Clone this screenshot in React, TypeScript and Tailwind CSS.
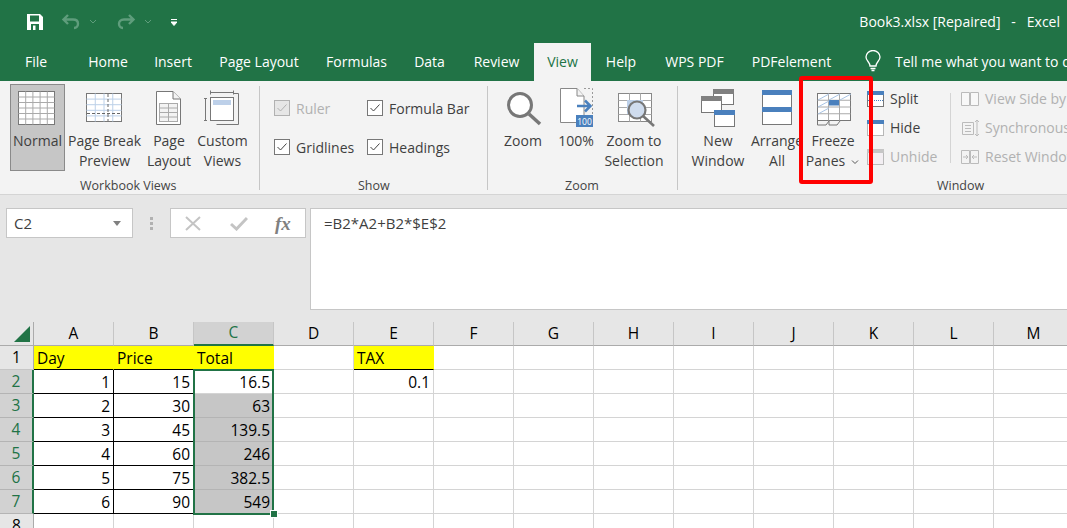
import React from "react";

const font = { fontFamily: '"Open Sans", "Noto Sans", sans-serif' };

const tabs = [
  { label: "File", w: "w-[75px] pr-[3px]" },
  { label: "Home", w: "w-[66px]" },
  { label: "Insert", w: "w-[64px]" },
  { label: "Page Layout", w: "w-[108px]" },
  { label: "Formulas", w: "w-[87px]" },
  { label: "Data", w: "w-[59px]" },
  { label: "Review", w: "w-[75px]" },
  { label: "View", w: "w-[57px]", active: true },
  { label: "Help", w: "w-[60px]" },
  { label: "WPS PDF", w: "w-[87px]" },
  { label: "PDFelement", w: "w-[107px]" },
];

// icons are drawn in page coordinates, the viewBox crops them to the button
function Icon({ x, w, children }: { x: number; w: number; children?: React.ReactNode }) {
  return (
    <svg width={w} height={47} viewBox={`${x} 84 ${w} 47`} className="block shrink-0">
      {children}
    </svg>
  );
}

function GridLines({ x, y, w, h, cols, rows, color }: { x: number; y: number; w: number; h: number; cols: number; rows: number; color: string }) {
  const out = [];
  for (let i = 1; i < cols; i++) {
    const p = x + (w * i) / cols;
    out.push(<line key={"c" + i} x1={p} y1={y} x2={p} y2={y + h} stroke={color} />);
  }
  for (let i = 1; i < rows; i++) {
    const p = y + (h * i) / rows;
    out.push(<line key={"r" + i} x1={x} y1={p} x2={x + w} y2={p} stroke={color} />);
  }
  return <>{out}</>;
}

function RibbonButton({ w, x, lines, active, chevron, children }: { w: string; x: number; lines: string[]; active?: boolean; chevron?: boolean; children?: React.ReactNode }) {
  const px = parseInt(w.replace(/\D/g, ""), 10);
  return (
    <div className={`${w} h-[87px] flex flex-col items-center shrink-0 ${active ? "bg-[#c6c6c6] outline outline-1 -outline-offset-1 outline-[#8a8a8a]" : ""}`}>
      <Icon x={x} w={px}>{children}</Icon>
      {lines.map((l, i) => (
        <div key={l} className="h-[20px] leading-[20px] whitespace-nowrap flex items-center">
          {l}
          {chevron && i === lines.length - 1 && (
            <svg width="10" height="6" viewBox="0 0 10 6" className="ml-[5px] mt-[2px]">
              <path d="M2 1.5 L5 4.5 L8 1.5" fill="none" stroke="#555" />
            </svg>
          )}
        </div>
      ))}
    </div>
  );
}

function Check({ label, disabled }: { label: string; disabled?: boolean }) {
  return (
    <div className={`flex items-center gap-[6px] h-[16px] ${disabled ? "text-[#b1b1b1]" : ""}`}>
      <span className={`w-[16px] h-[16px] border flex items-center justify-center ${disabled ? "border-[#b1b1b1] bg-[#e6e6e6]" : "border-[#777] bg-white"}`}>
        <svg width="12" height="10" viewBox="0 0 12 10">
          <path d="M1.5 5 L4.5 8 L10.5 1.5" fill="none" stroke={disabled ? "#b1b1b1" : "#444"} />
        </svg>
      </span>
      <span className="whitespace-nowrap">{label}</span>
    </div>
  );
}

function SmallRow({ label, disabled, children, gap }: { label: string; disabled?: boolean; children?: React.ReactNode; gap: string }) {
  return (
    <div className={`flex items-center h-[29px] whitespace-nowrap ${gap} ${disabled ? "text-[#b1b1b1]" : ""}`}>
      <svg width="20" height="20" viewBox="0 0 20 20" className="shrink-0">{children}</svg>
      <span>{label}</span>
    </div>
  );
}

function GroupLabel({ children, cls }: { children: React.ReactNode; cls: string }) {
  return <div className={`absolute top-[96px] h-[18px] leading-[18px] text-[12.5px] text-[#444] ${cls}`}>{children}</div>;
}

const columns = ["A", "B", "C", "D", "E", "F", "G", "H", "I", "J", "K", "L", "M"];

const sheet: Record<string, string> = {
  A1: "Day", B1: "Price", C1: "Total", E1: "TAX",
  A2: "1", B2: "15", C2: "16.5", E2: "0.1",
  A3: "2", B3: "30", C3: "63",
  A4: "3", B4: "45", C4: "139.5",
  A5: "4", B5: "60", C5: "246",
  A6: "5", B6: "75", C6: "382.5",
  A7: "6", B7: "90", C7: "549",
};

function Cell({ col, row }: { col: string; row: number }) {
  const id = col + row;
  const text = sheet[id];
  const isTable = (col === "A" || col === "B" || col === "C") && row <= 7;
  const yellow = row === 1 && (isTable || col === "E");
  const grey = col === "C" && row >= 3 && row <= 7;
  const black = (col === "A" || col === "B") && row >= 2 && row <= 7;
  let bg = "bg-white";
  if (yellow) bg = "bg-[#ffff00]";
  if (grey) bg = "bg-[#c6c6c6]";
  let border = "border-[#d4d4d4]";
  if (black) border = "border-black";
  if (yellow) border = "border-r-[#ffff00] border-b-black";
  if (grey) border = "border-[#b4b4b4]";
  return (
    <div className={`h-[24px] border-r border-b ${bg} ${border} px-[3px] text-[15.5px] leading-[25px] text-black whitespace-nowrap ${row === 1 ? "text-left" : "text-right"}`}>
      {text}
    </div>
  );
}

export default function App() {
  return (
    <div className="relative w-[1067px] h-[528px] overflow-hidden bg-[#e6e6e6] text-[14px] text-[#3f3f3f]" style={font}>
      {/* Title bar */}
      <div className="h-[43px] bg-[#217346] flex items-center text-white">
        <svg width="18" height="18" viewBox="0 0 18 18" className="ml-[26px]">
          <path d="M1 1 H14 L17 4 V17 H1 Z" fill="white" />
          <rect x="4" y="2.5" width="9" height="6" fill="#217346" />
          <rect x="5" y="11" width="8" height="6" fill="#217346" />
          <rect x="7" y="12.5" width="2.5" height="4.5" fill="white" />
        </svg>
        <svg width="20" height="18" viewBox="0 0 20 18" className="ml-[17px]">
          <path d="M7 2 L2.5 6.5 L7 11 M3 6.5 H12 C19 6.5 18 15 13 15" fill="none" stroke="#5f9d7c" strokeWidth="2.4" />
        </svg>
        <svg width="8" height="5" viewBox="0 0 8 5" className="ml-[8px]">
          <path d="M1 1 L4 4 L7 1" fill="none" stroke="#5f9d7c" />
        </svg>
        <svg width="20" height="18" viewBox="0 0 20 18" className="ml-[19px]">
          <path d="M13 2 L17.5 6.5 L13 11 M17 6.5 H8 C1 6.5 2 15 7 15" fill="none" stroke="#5f9d7c" strokeWidth="2.4" />
        </svg>
        <svg width="8" height="5" viewBox="0 0 8 5" className="ml-[8px]">
          <path d="M1 1 L4 4 L7 1" fill="none" stroke="#5f9d7c" />
        </svg>
        <svg width="6" height="7" viewBox="0 0 6 7" className="ml-[19px] mt-[1px]">
          <path d="M0 0.5 H6 M0 3 H6 L3 6.5 Z" fill="white" stroke="white" strokeWidth="1" />
        </svg>
        <div className="ml-auto mr-[7px] text-[14px] whitespace-pre">Book3.xlsx [Repaired]   -   Excel</div>
      </div>

      {/* Tabs */}
      <div className="h-[38px] bg-[#217346] flex items-stretch text-white">
        {tabs.map((t) => (
          <div key={t.label} className={`${t.w} shrink-0 flex items-center justify-center pb-[1px] whitespace-nowrap ${t.active ? "bg-[#f3f3f3] text-[#217346]" : ""}`}>
            {t.label}
          </div>
        ))}
        <svg width="18" height="22" viewBox="0 0 18 22" className="ml-[19px] mt-[7px] shrink-0">
          <path d="M6 16 C6 12 2 11 2 7 A7 6.5 0 0 1 16 7 C16 11 12 12 12 16 Z M6.5 18.5 H11.5 M7.5 20.5 H10.5" fill="none" stroke="white" strokeWidth="1.3" />
        </svg>
        <div className="ml-[13px] flex items-center pb-[1px] whitespace-nowrap">Tell me what you want to do</div>
      </div>

      {/* Ribbon */}
      <div className="relative h-[114px] bg-[#f3f3f3] border-b border-[#d4d4d4] flex">
        <div className="w-[260px] relative shrink-0 flex pl-[10px] pt-[3px]">
          <RibbonButton w="w-[55px]" x={10} lines={["Normal"]} active>
            <rect x="18.5" y="91.5" width="36" height="33" fill="white" stroke="#777" />
            <GridLines x={18.5} y={91.5} w={36} h={33} cols={5} rows={6} color="#aaa" />
          </RibbonButton>
          <RibbonButton w="w-[79px]" x={65} lines={["Page Break", "Preview"]}>
            <rect x="86.5" y="93.5" width="35" height="28" fill="white" stroke="#777" />
            <GridLines x={86.5} y={93.5} w={35} h={28} cols={4} rows={5} color="#bcd0e8" />
            <path d="M108 94 V121 M87 113.5 H121" stroke="#666" strokeDasharray="3 2" />
          </RibbonButton>
          <RibbonButton w="w-[50px]" x={144} lines={["Page", "Layout"]}>
            <path d="M156.5 91.5 H173 L180.5 99 V124.5 H156.5 Z" fill="white" stroke="#777" />
            <path d="M173 91.5 V99 H180.5" fill="#f3f3f3" stroke="#777" />
            <rect x="159.5" y="103.5" width="18" height="18" fill="#f3f3f3" stroke="#aaa" />
            <GridLines x={159.5} y={103.5} w={18} h={18} cols={2} rows={4} color="#aaa" />
          </RibbonButton>
          <RibbonButton w="w-[57px]" x={194} lines={["Custom", "Views"]}>
            <path d="M210.5 90.5 H233.5 M210.5 88.5 V92.5 M233.5 88.5 V92.5" stroke="#777" transform="translate(0 2)" />
            <path d="M204 98.5 H207 M204 120.5 H207 M205.5 98.5 V120.5" stroke="#777" />
            <path d="M216.5 124.5 H238.5 V93.5 H234" fill="none" stroke="#777" />
            <rect x="210.5" y="97.5" width="23" height="23" fill="white" stroke="#777" />
            <rect x="213" y="100" width="18" height="5" fill="#bdd0e9" />
          </RibbonButton>
          <GroupLabel cls="left-[80px]">Workbook Views</GroupLabel>
          <div className="absolute right-0 top-[5px] h-[104px] w-[1px] bg-[#c6c6c6]" />
        </div>

        <div className="w-[228px] relative shrink-0 pl-[14px] pt-[19px] grid grid-cols-[93px_auto] grid-rows-[16px_16px] gap-y-[23px] content-start">
          <Check label="Ruler" disabled />
          <Check label="Formula Bar" />
          <Check label="Gridlines" />
          <Check label="Headings" />
          <GroupLabel cls="left-[98px]">Show</GroupLabel>
          <div className="absolute right-0 top-[5px] h-[104px] w-[1px] bg-[#c6c6c6]" />
        </div>

        <div className="w-[190px] relative shrink-0 flex pl-[10px] pt-[3px]">
          <RibbonButton w="w-[50px]" x={498} lines={["Zoom"]}>
            <circle cx="520" cy="105" r="11.5" fill="white" stroke="#777" strokeWidth="3" />
            <path d="M529 114 L540 124" stroke="#777" strokeWidth="3.5" />
          </RibbonButton>
          <RibbonButton w="w-[56px]" x={548} lines={["100%"]}>
            <path d="M560.5 88.5 H577 L584 96 V122.5 H560.5 Z" fill="white" stroke="#888" />
            <path d="M577 88.5 V96 H584" fill="#f3f3f3" stroke="#888" />
            <path d="M584 88.5 H592.5 V122.5 H584" fill="none" stroke="#999" strokeDasharray="2 2" />
            <path d="M577 106 H590 M585 100.5 L590.5 106 L585 111.5" fill="none" stroke="#4a80bd" strokeWidth="2.5" />
            <rect x="576" y="115" width="17" height="12" fill="#4a80bd" />
            <text x="584.5" y="124.5" textAnchor="middle" fontSize="8.5" fill="white">100</text>
          </RibbonButton>
          <RibbonButton w="w-[60px]" x={604} lines={["Zoom to", "Selection"]}>
            <rect x="618.5" y="93.5" width="33" height="28" fill="white" stroke="#888" />
            <GridLines x={618.5} y={93.5} w={33} h={28} cols={3} rows={4} color="#aaa" />
            <rect x="627" y="100" width="16" height="14" fill="#bdd0e9" />
            <circle cx="637" cy="110" r="8.5" fill="#cfdcee" stroke="#777" strokeWidth="2.2" />
            <path d="M643 116 L654 126" stroke="#777" strokeWidth="2.6" />
          </RibbonButton>
          <GroupLabel cls="left-[77px]">Zoom</GroupLabel>
          <div className="absolute right-0 top-[5px] h-[104px] w-[1px] bg-[#c6c6c6]" />
        </div>

        <div className="flex-1 relative flex pl-[12px] pt-[3px] overflow-hidden">
          <RibbonButton w="w-[56px]" x={690} lines={["New", "Window"]}>
            <rect x="713.5" y="89.5" width="20" height="15" fill="white" stroke="#777" />
            <rect x="713" y="89" width="21" height="5" fill="#808080" />
            <rect x="701.5" y="96.5" width="20" height="16" fill="white" stroke="#777" />
            <rect x="701" y="96" width="21" height="5" fill="#808080" />
            <rect x="714.5" y="110.5" width="20" height="16" fill="white" stroke="#777" />
            <rect x="714" y="110" width="21" height="5" fill="#4a80bd" />
          </RibbonButton>
          <RibbonButton w="w-[62px]" x={746} lines={["Arrange", "All"]}>
            <rect x="762.5" y="90.5" width="29" height="34" fill="white" stroke="#777" />
            <rect x="762" y="90" width="30" height="5" fill="#4a80bd" />
            <rect x="762" y="107" width="30" height="5" fill="#4a80bd" />
          </RibbonButton>
          <RibbonButton w="w-[50px]" x={808} lines={["Freeze", "Panes"]} chevron>
            <rect x="817.5" y="93.5" width="33" height="27" fill="white" stroke="#777" />
            <GridLines x={817.5} y={93.5} w={33} h={27} cols={3} rows={4} color="#aaa" />
            <rect x="829" y="100" width="10" height="5.5" fill="#4a80bd" />
            <path d="M818 100 L829 94 M829 100 L840 94 M840 100 L851 94 M818 107 L829 101 M818 114 L829 108" stroke="#a9c4e4" />
            <path d="M817.5 120.5 V125 H826 L829 121 V125 H837 L840 121" fill="none" stroke="#777" />
          </RibbonButton>
          <div className="w-[1px] shrink-0" />
          <div className="flex flex-col ml-[7px] shrink-0 w-[84px]">
            <SmallRow label="Split" gap="gap-[4px]">
              <rect x="1.5" y="2.5" width="16" height="15" fill="white" stroke="#777" />
              <rect x="1" y="2" width="17" height="4" fill="#4a80bd" />
              <path d="M2 11.5 H17" stroke="#4a80bd" strokeDasharray="1 1" />
            </SmallRow>
            <SmallRow label="Hide" gap="gap-[4px]">
              <rect x="1.5" y="2.5" width="16" height="15" fill="white" stroke="#777" strokeDasharray="1 1" />
              <rect x="1" y="2" width="17" height="4" fill="#4a80bd" />
            </SmallRow>
            <SmallRow label="Unhide" disabled gap="gap-[4px]">
              <rect x="1.5" y="2.5" width="16" height="15" fill="#f3eff3" stroke="#bbb" />
              <rect x="1" y="2" width="17" height="4" fill="#c6c6c6" />
            </SmallRow>
          </div>
          <div className="w-[1px] h-[70px] mt-[9px] bg-[#d4d4d4] shrink-0" />
          <div className="flex flex-col ml-[9px] shrink-0">
            <SmallRow label="View Side by Side" disabled gap="gap-[5px]">
              <path d="M1.5 3.5 H9.5 V16.5 H1.5 Z M10.5 3.5 H18.5 V16.5 H10.5 Z" fill="#f8f8f8" stroke="#bbb" />
            </SmallRow>
            <SmallRow label="Synchronous Scrolling" disabled gap="gap-[5px]">
              <path d="M2.5 4.5 H13.5 V16.5 H2.5 Z M5 7.5 H11 M5 10.5 H11 M5 13.5 H11 M17 2 V18 M15 4 L17 2 L19 4 M15 16 L17 18 L19 16" fill="none" stroke="#bbb" />
            </SmallRow>
            <SmallRow label="Reset Window Position" disabled gap="gap-[5px]">
              <path d="M1.5 3.5 H9.5 V16.5 H1.5 Z M10.5 3.5 H18.5 V16.5 H10.5 Z M3 10 H8 M6 8 L8 10 L6 12 M17 10 H12 M14 8 L12 10 L14 12" fill="none" stroke="#bbb" />
            </SmallRow>
          </div>
          <GroupLabel cls="left-[259px]">Window</GroupLabel>
        </div>
      </div>

      {/* Formula bar */}
      <div className="h-[127px] flex items-start pt-[13px] pl-[6px]">
        <div className="w-[127px] h-[30px] shrink-0 bg-white border border-[#c6c6c6] flex items-center justify-between pl-[7px] pr-[11px]">
          <span className="text-[15px]">C2</span>
          <svg width="8" height="5" viewBox="0 0 8 5"><path d="M0 0 H8 L4 5 Z" fill="#808080" /></svg>
        </div>
        <div className="w-[37px] h-[30px] shrink-0 flex flex-col items-center justify-center gap-[2px]">
          <span className="w-[3px] h-[3px] bg-[#b1b1b1]" />
          <span className="w-[3px] h-[3px] bg-[#b1b1b1]" />
          <span className="w-[3px] h-[3px] bg-[#b1b1b1]" />
        </div>
        <div className="w-[136px] h-[30px] shrink-0 bg-white border border-[#c6c6c6] flex items-center">
          <svg width="16" height="15" viewBox="0 0 16 15" className="ml-[14px]">
            <path d="M1 1 L15 14 M15 1 L1 14" stroke="#c4c4c4" strokeWidth="2" />
          </svg>
          <svg width="18" height="15" viewBox="0 0 18 15" className="ml-[29px]">
            <path d="M1 8 L6.5 13 L17 2" fill="none" stroke="#c4c4c4" strokeWidth="3" />
          </svg>
          <span className="ml-[27px] text-[19px] leading-none font-bold italic text-[#808080]" style={{ fontFamily: '"Liberation Serif", serif' }}>fx</span>
        </div>
        <div className="ml-[4px] flex-1 h-[102px] bg-white border border-r-0 border-[#c6c6c6] pl-[13px] pt-[4px] text-[15px] leading-[20px]">
          =B2*A2+B2*$E$2
        </div>
      </div>

      {/* Sheet */}
      <div className="relative grid grid-cols-[34px_repeat(13,80px)] grid-rows-[24px_repeat(8,24px)] w-[1074px]">
        <div className="h-[24px] bg-[#e6e6e6] border-r border-b border-[#ababab] flex items-end justify-end pr-[3px] pb-[3px]">
          <svg width="16" height="16" viewBox="0 0 16 16"><path d="M16 0 V16 H0 Z" fill="#217346" /></svg>
        </div>
        {columns.map((c) => (
          <div key={c} className={`h-[24px] flex items-center justify-center text-[15.5px] border-r border-b border-r-[#c6c6c6] ${c === "C" ? "bg-[#d2d2d2] text-[#217346] border-b-[#217346] border-b-2 border-r-[#ababab]" : "bg-[#e6e6e6] text-black border-b-[#ababab]"}`}>
            {c}
          </div>
        ))}
        {[1, 2, 3, 4, 5, 6, 7, 8].map((r) => {
          const selected = r >= 2 && r <= 7;
          return (
            <React.Fragment key={r}>
              <div className={`h-[24px] flex items-center justify-center text-[15.5px] border-b ${selected ? "bg-[#d2d2d2] text-[#217346] border-r-2 border-r-[#217346] border-b-[#b4b4b4]" : "bg-[#e6e6e6] text-black border-r border-r-[#ababab] border-b-[#c6c6c6]"}`}>
                {r}
              </div>
              {columns.map((c) => <Cell key={c} col={c} row={r} />)}
            </React.Fragment>
          );
        })}
        {/* selection of C2:C7 */}
        <div className="absolute left-[193px] top-[47px] w-[81px] h-[146px] border-2 border-[#217346]" />
        <div className="absolute left-[271px] top-[189px] w-[6px] h-[6px] bg-[#217346] outline outline-1 outline-white" />
      </div>

      {/* Red highlight around Freeze Panes */}
      <div className="absolute left-[799px] top-[76px] w-[74px] h-[108px] border-[4px] border-[#ff0000] rounded-[3px]" />
    </div>
  );
}
